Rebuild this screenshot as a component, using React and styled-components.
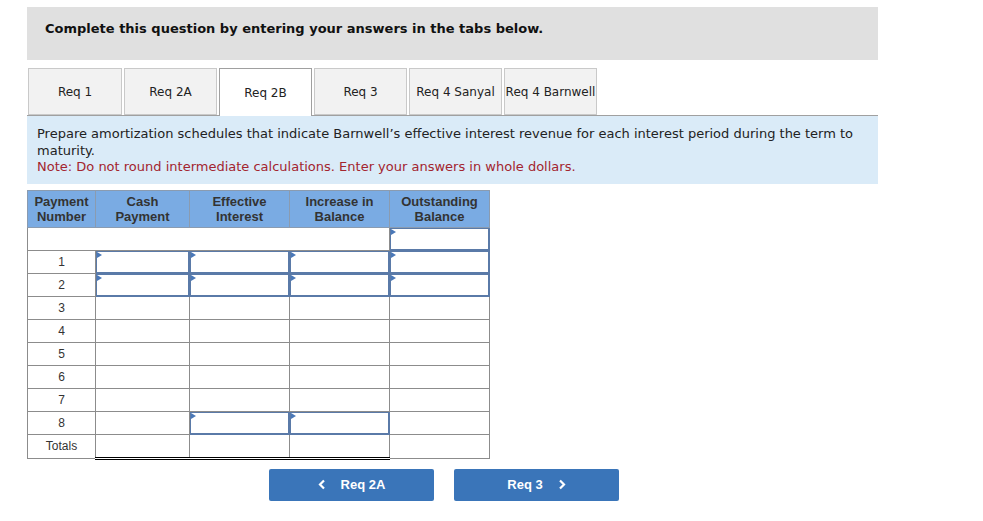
import React from "react";
import styled, { createGlobalStyle } from "styled-components";

const Global = createGlobalStyle`
  html, body { margin: 0; padding: 0; background: #fff; }
  body { font-family: "DejaVu Sans", Verdana, sans-serif; color: #222; }
`;

const Page = styled.div`
  padding: 7px 0 0 27px;
  width: 851px;
`;

const Banner = styled.div`
  box-sizing: border-box;
  background: #e0e0e0;
  height: 53px;
  padding: 14px 0 0 18px;
  font-weight: bold;
  font-size: 13px;
  line-height: 16px;
  color: #111;
`;

const TabBar = styled.div`
  margin-top: 8px;
  display: flex;
  gap: 2px;
  padding-left: 1px;
  border-bottom: 1px solid #a0a0a0;
  height: 47px;
  align-items: flex-end;
`;

const Tab = styled.div`
  box-sizing: border-box;
  width: ${(p) => (p.$first ? 94 : 93)}px;
  height: ${(p) => (p.$active ? 48 : 47)}px;
  margin-bottom: ${(p) => (p.$active ? -1 : 0)}px;
  background: ${(p) => (p.$active ? "#fff" : "#f2f2f2")};
  border: 1px solid ${(p) => (p.$active ? "#a0a0a0" : "#c9c9c9")};
  border-bottom: ${(p) => (p.$active ? "none" : "1px solid #c9c9c9")};
  display: flex;
  align-items: center;
  justify-content: center;
  font-size: 12px;
  color: #222;
  white-space: nowrap;
  overflow: hidden;
  padding-top: 1px;
`;

const Info = styled.div`
  background: #daebf8;
  padding: 10px 10px 8px 10px;
  font-size: 13px;
  line-height: 16.5px;
  color: #222;
`;

const Note = styled.div`
  color: #a3252f;
`;

const Table = styled.table`
  margin-top: 6px;
  border-collapse: collapse;
  table-layout: fixed;
  font-family: "Liberation Sans", Arial, sans-serif;
  color: #333;
`;

const Th = styled.th`
  background: #7aabe3;
  border: 1px solid #8a9bb0;
  font-size: 13px;
  font-weight: bold;
  line-height: 15px;
  height: 36px;
  padding: 0 2px;
  color: #333;
  text-align: center;
`;

const Td = styled.td`
  border: 1px solid #8c8c8c;
  height: 22px;
  padding: 0;
  font-size: 12px;
  text-align: center;
  border-top: ${(p) => (p.$total ? "1px solid #000" : "1px solid #8c8c8c")};
  border-bottom: ${(p) => (p.$total ? "3px double #000" : "1px solid #8c8c8c")};
`;

const InputTd = styled.td`
  border: 1px solid #5a7aa8;
  height: 22px;
  padding: 0;
`;

const InputBox = styled.div`
  box-sizing: border-box;
  height: 22px;
  border: 1px solid #5a7aa8;
  background: #fff;
  position: relative;
  &::before {
    content: "";
    position: absolute;
    left: 0;
    top: 0;
    border-top: 3px solid transparent;
    border-bottom: 3px solid transparent;
    border-left: 5px solid #4a78b8;
  }
`;

const Buttons = styled.div`
  display: flex;
  gap: 20px;
  margin: 9px 0 0 242px;
`;

const NavButton = styled.button`
  width: 165px;
  height: 32px;
  border: none;
  border-radius: 2px;
  background: #3a75b9;
  color: #fff;
  font-family: "Liberation Sans", Arial, sans-serif;
  font-weight: bold;
  font-size: 13px;
  display: flex;
  align-items: center;
  justify-content: center;
  gap: 15px;
  padding: 0;
  cursor: pointer;
`;

const Chevron = ({ dir }) => (
  <svg width="8" height="11" viewBox="0 0 8 11">
    <path
      d={dir === "left" ? "M6 1.5 L2 5.5 L6 9.5" : "M2 1.5 L6 5.5 L2 9.5"}
      fill="none"
      stroke="#fff"
      strokeWidth="2.2"
    />
  </svg>
);

const Input = () => (
  <InputTd>
    <InputBox />
  </InputTd>
);

const tabs = ["Req 1", "Req 2A", "Req 2B", "Req 3", "Req 4 Sanyal", "Req 4 Barnwell"];

export default function App() {
  const plainRows = [3, 4, 5, 6, 7];
  return (
    <>
      <Global />
      <Page>
        <Banner>Complete this question by entering your answers in the tabs below.</Banner>
        <TabBar>
          {tabs.map((t, i) => (
            <Tab key={t} $first={i === 0} $active={t === "Req 2B"}>
              {t}
            </Tab>
          ))}
        </TabBar>
        <Info>
          Prepare amortization schedules that indicate Barnwell’s effective interest revenue for each interest period during the term to maturity.
          <Note>Note: Do not round intermediate calculations. Enter your answers in whole dollars.</Note>
        </Info>
        <Table>
          <colgroup>
            <col style={{ width: 68 }} />
            <col style={{ width: 94 }} />
            <col style={{ width: 100 }} />
            <col style={{ width: 100 }} />
            <col style={{ width: 100 }} />
          </colgroup>
          <thead>
            <tr>
              <Th>Payment<br />Number</Th>
              <Th>Cash<br />Payment</Th>
              <Th>Effective<br />Interest</Th>
              <Th>Increase in<br />Balance</Th>
              <Th>Outstanding<br />Balance</Th>
            </tr>
          </thead>
          <tbody>
            <tr>
              <Td colSpan={4} />
              <Input />
            </tr>
            {[1, 2].map((n) => (
              <tr key={n}>
                <Td>{n}</Td>
                <Input />
                <Input />
                <Input />
                <Input />
              </tr>
            ))}
            {plainRows.map((n) => (
              <tr key={n}>
                <Td>{n}</Td>
                <Td />
                <Td />
                <Td />
                <Td />
              </tr>
            ))}
            <tr>
              <Td>8</Td>
              <Td />
              <Input />
              <Input />
              <Td />
            </tr>
            <tr>
              <Td>Totals</Td>
              <Td $total />
              <Td $total />
              <Td $total />
              <Td />
            </tr>
          </tbody>
        </Table>
        <Buttons>
          <NavButton>
            <Chevron dir="left" />
            Req 2A
          </NavButton>
          <NavButton>
            Req 3
            <Chevron dir="right" />
          </NavButton>
        </Buttons>
      </Page>
    </>
  );
}
